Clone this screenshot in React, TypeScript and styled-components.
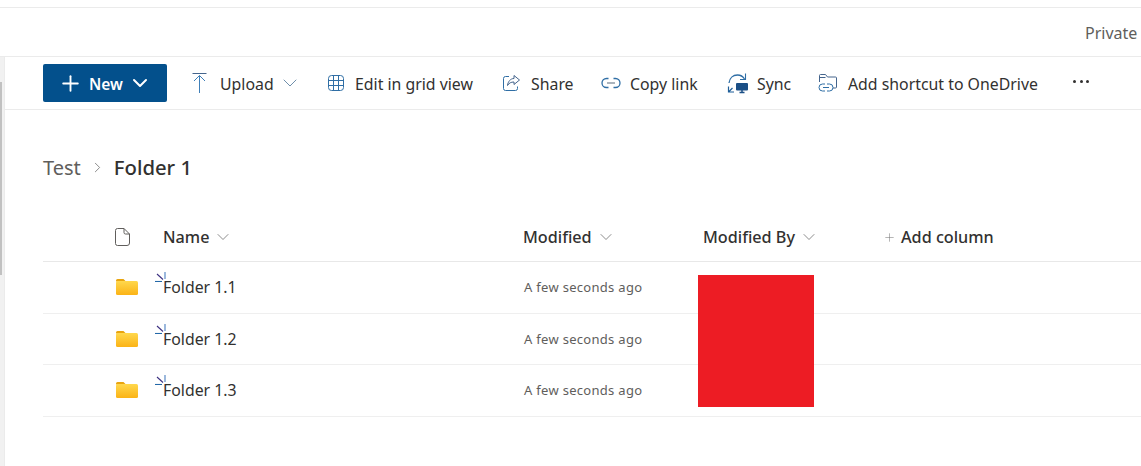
import React from 'react'
import styled, { createGlobalStyle } from 'styled-components'
import { ChevronDown, ChevronRight, Plus } from 'lucide-react'

const GlobalStyle = createGlobalStyle`
  html, body {
    margin: 0;
    padding: 0;
    background: #fff;
    overflow: hidden;
  }
  body {
    font-family: 'Noto Sans', 'Open Sans', sans-serif;
    color: #323130;
  }
`

const UploadIcon = () => (
  <svg width="18" height="22" viewBox="0 0 18 22" fill="none">
    <path d="M1.5 1.5h14" stroke="#44648c" />
    <path d="M8.5 21V3.500M3 9l5.500-5.500L14 9" stroke="#3f7fb8" />
  </svg>
)

const GridIcon = () => (
  <svg width="18" height="18" viewBox="0 0 18 18" fill="none" stroke="#2f6ea5">
    <rect x="1.5" y="1.5" width="15" height="15" rx="3" />
    <path d="M1.5 6.5h15M1.5 11.5h15M6.5 1.5v15M11.5 1.5v15" />
  </svg>
)

const ShareIcon = () => (
  <svg width="19" height="18" viewBox="0 0 19 18" fill="none">
    <path d="M7 2.500H3.500a2 2 0 0 0-2 2v10a2 2 0 0 0 2 2h10a2 2 0 0 0 2-2v-2" stroke="#2f6ea5" />
    <path d="M12 1.500l5.500 4.500-5.500 4.500V8c-3 0-5 1-6.500 3.500C6 7.500 8.500 4.500 12 4.500z" stroke="#44648c" />
  </svg>
)

const LinkIcon = () => (
  <svg width="20" height="12" viewBox="0 0 20 12" fill="none">
    <path d="M7.500 1.500H5.500a4.500 4.500 0 0 0 0 9h2M12.500 1.500h2a4.500 4.500 0 0 1 0 9h-2" stroke="#2f6ea5" strokeWidth="1.300" />
    <path d="M6 6h8" stroke="#7d8b99" strokeWidth="1.300" />
  </svg>
)

const SyncIcon = () => (
  <svg width="22" height="22" viewBox="0 0 22 22" fill="none">
    <path d="M2 11c.5-5 4-8 8.500-8 3 0 5.500 1.500 7 4" stroke="#2f6ea5" strokeWidth="1.300" />
    <path d="M18.500 1.500V7.500H13" stroke="#2f6ea5" strokeWidth="1.100" />
    <path d="M1.500 14.500v5.500H7M1.500 20l4-4" stroke="#1f5f99" strokeWidth="1.200" />
    <rect x="9" y="11" width="12" height="7.500" rx="1" fill="#1b4f86" />
    <path d="M12.500 20.500h5M15 18v2.500" stroke="#1b4f86" strokeWidth="1.500" />
  </svg>
)

const ShortcutIcon = () => (
  <svg width="20" height="20" viewBox="0 0 20 20" fill="none">
    <path d="M1.500 9V2.500a1 1 0 0 1 1-1h5l2 2.500h8a1 1 0 0 1 1 1v9a1 1 0 0 1-1 1H15" stroke="#44648c" />
    <path d="M1.500 4.500h6" stroke="#44648c" />
    <path d="M7 11H4.500a3 3 0 0 0 0 7H7M9 11h2.500a3 3 0 0 1 0 7H9M5 14.500h6" stroke="#2f6ea5" />
  </svg>
)

const PageIcon = () => (
  <svg width="15" height="18" viewBox="0 0 15 18" fill="none" stroke="#605e5c">
    <path d="M2.500.5h6.500L14.500 6V15a2.500 2.500 0 0 1-2.500 2.500H2.500A2 2 0 0 1 .5 15.500V2.500a2 2 0 0 1 2-2z" />
    <path d="M9 .5V4.500A1.500 1.500 0 0 0 10.500 6h4" />
  </svg>
)

const FolderIcon = () => (
  <svg width="24" height="18" viewBox="0 0 24 18">
    <defs>
      <linearGradient id="folderFill" x1="0" y1="0" x2="0" y2="1">
        <stop offset="0" stopColor="#ffd84d" />
        <stop offset="1" stopColor="#fbb316" />
      </linearGradient>
    </defs>
    <path d="M1 2.500A1.500 1.500 0 0 1 2.500 1h6L11 3.500H1z" fill="#e9a50f" />
    <rect x="1" y="3" width="22" height="14" rx="1.500" fill="url(#folderFill)" />
  </svg>
)

const Sparkle = () => (
  <SparkleMark width="11" height="10" viewBox="0 0 11 10" fill="none">
    <path d="M0 9.500h7" stroke="#2468a8" strokeWidth="1.100" />
    <path d="M2 2l6 5.500" stroke="#3b2f80" strokeWidth="1.100" />
    <path d="M10 0v7" stroke="#4a7fc0" strokeWidth="1.100" />
  </SparkleMark>
)

const commands = [
  { icon: <GridIcon />, label: 'Edit in grid view', gap: 10, width: 175 },
  { icon: <ShareIcon />, label: 'Share', gap: 10, width: 99 },
  { icon: <LinkIcon />, label: 'Copy link', gap: 9, width: 126 },
  { icon: <SyncIcon />, label: 'Sync', gap: 8, width: 91 },
  { icon: <ShortcutIcon />, label: 'Add shortcut to OneDrive', gap: 10, width: 255 },
]

const rows = ['Folder 1.1', 'Folder 1.2', 'Folder 1.3']

const SortArrow = () => <ChevronDown size={20} strokeWidth={0.9} color="#666" />

const App = () => (
  <Page>
    <GlobalStyle />
    <TopStrip />
    <SiteBar>
      <Privacy>Private group</Privacy>
    </SiteBar>
    <Body>
      <Gutter>
        <GutterThumb />
      </Gutter>
      <Main>
        <CommandBar>
          <NewButton>
            <Plus size={25} strokeWidth={1.8} />
            <span>New</span>
            <ChevronDown size={24} strokeWidth={2} />
          </NewButton>
          <UploadCommand>
            <UploadIcon />
            <span>Upload</span>
            <ChevronDown size={24} strokeWidth={1} color="#6f8fab" />
          </UploadCommand>
          {commands.map((c) => (
            <Command key={c.label} $gap={c.gap} $width={c.width}>
              {c.icon}
              <span>{c.label}</span>
            </Command>
          ))}
          <MoreDots>
            <i />
            <i />
            <i />
          </MoreDots>
        </CommandBar>
        <Content>
          <Breadcrumb>
            <Crumb>Test</Crumb>
            <ChevronRight size={17} strokeWidth={1.2} color="#777" />
            <CurrentCrumb>Folder 1</CurrentCrumb>
          </Breadcrumb>
          <Table>
            <HeaderRow>
              <IconCell>
                <PageIcon />
              </IconCell>
              <HeaderCell>
                Name
                <SortArrow />
              </HeaderCell>
              <HeaderCell>
                Modified
                <SortArrow />
              </HeaderCell>
              <HeaderCell>
                Modified By
                <SortArrow />
              </HeaderCell>
              <AddColumn>
                <Plus size={13} strokeWidth={1} color="#777" />
                Add column
              </AddColumn>
            </HeaderRow>
            {rows.map((name) => (
              <Row key={name}>
                <IconCell>
                  <FolderIcon />
                </IconCell>
                <NameCell>
                  <Sparkle />
                  {name}
                </NameCell>
                <DateCell>A few seconds ago</DateCell>
                <div />
                <div />
              </Row>
            ))}
            <Redaction />
          </Table>
        </Content>
      </Main>
    </Body>
  </Page>
)

const Page = styled.div`
  width: 1141px;
  height: 466px;
  display: flex;
  flex-direction: column;
  overflow: hidden;
`
const TopStrip = styled.div`
  height: 7px;
  border-bottom: 1px solid #ebebeb;
`
const SiteBar = styled.div`
  height: 48px;
  display: flex;
  align-items: center;
  padding-left: 1085px;
  border-bottom: 1px solid #ebebeb;
  white-space: nowrap;
`
const Privacy = styled.span`
  padding-top: 2px;
  font-size: 16px;
  color: #605e5c;
`
const Body = styled.div`
  flex: 1;
  display: flex;
  min-height: 0;
`
const Gutter = styled.div`
  width: 4px;
  background: #f1f1f1;
  border-right: 1px solid #ebebeb;
  padding-top: 25px;
`
const GutterThumb = styled.div`
  width: 2px;
  height: 193px;
  background: #c1c1c1;
`
const Main = styled.div`
  flex: 1;
  min-width: 0;
`
const CommandBar = styled.div`
  height: 52px;
  display: flex;
  align-items: center;
  padding-left: 38px;
  border-bottom: 1px solid #ebebeb;
  white-space: nowrap;
`
const NewButton = styled.button`
  width: 124px;
  height: 38px;
  flex: none;
  display: flex;
  align-items: center;
  justify-content: center;
  gap: 6px;
  padding: 0;
  border: 0;
  border-radius: 2px;
  background: #03508c;
  color: #fff;
  font: 600 15.5px 'Noto Sans', sans-serif;
  span {
    padding-top: 2px;
  }
  span + svg {
    margin-left: -1px;
  }
`
const Command = styled.div<{ $gap: number; $width: number }>`
  flex: none;
  width: ${(p) => p.$width}px;
  display: flex;
  align-items: center;
  gap: ${(p) => p.$gap}px;
  font-size: 15.85px;
  color: #323130;
  span {
    padding-top: 2px;
  }
`
const UploadCommand = styled(Command).attrs({ $gap: 11, $width: 136 })`
  margin-left: 24px;
  span + svg {
    margin-left: -7px;
  }
`
const MoreDots = styled.div`
  display: flex;
  gap: 3.5px;
  margin-top: -3px;
  i {
    width: 3px;
    height: 3px;
    border-radius: 50%;
    background: #323130;
  }
`
const Content = styled.div`
  padding-left: 38px;
`
const Breadcrumb = styled.div`
  height: 114px;
  padding-bottom: 2px;
  display: flex;
  align-items: center;
  gap: 8px;
`
const Crumb = styled.span`
  font-size: 20px;
  color: #605e5c;
`
const CurrentCrumb = styled(Crumb)`
  font-size: 20.3px;
  font-weight: 500;
  color: #323130;
`
const Table = styled.div`
  position: relative;
  width: 1098px;
`
const columns = '120px 360px 180px 180px 1fr'
const HeaderRow = styled.div`
  height: 22px;
  padding-bottom: 13px;
  display: grid;
  grid-template-columns: ${columns};
  align-items: center;
  border-bottom: 1px solid #e8e8e8;
`
const Row = styled.div`
  height: 50.5px;
  display: grid;
  grid-template-columns: ${columns};
  align-items: center;
  border-bottom: 1px solid #efefef;
`
const IconCell = styled.div`
  display: flex;
  align-items: center;
  padding-left: 72px;
`
const HeaderCell = styled.div`
  display: flex;
  align-items: center;
  gap: 4px;
  font-size: 16.2px;
  font-weight: 500;
  color: #323130;
`
const AddColumn = styled(HeaderCell)`
  gap: 5px;
`
const NameCell = styled.div`
  position: relative;
  font-size: 15.85px;
  color: #323130;
`
const SparkleMark = styled.svg`
  position: absolute;
  left: -8px;
  top: -4px;
`
const DateCell = styled.div`
  padding-left: 1px;
  font-size: 13px;
  color: #605e5c;
  letter-spacing: 0.3px;
`
const Redaction = styled.div`
  position: absolute;
  left: 655px;
  top: 49px;
  width: 116px;
  height: 132px;
  background: #ed1c24;
`

export default App
